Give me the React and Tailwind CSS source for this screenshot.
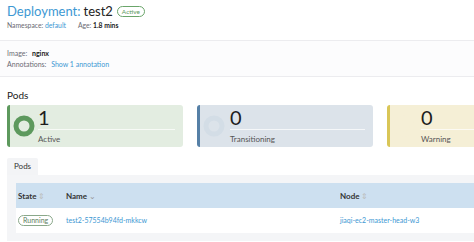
import React from "react";

function Stat({ value, label, border, bg, ring, valueOffset }) {
  return (
    <div className={`flex h-[42px] w-[176px] shrink-0 rounded-[3px] border-l-[3px] ${border} ${bg}`}>
      <div className="flex w-[28px] items-center justify-center">
        <svg width="22" height="22" viewBox="0 0 22 22">
          <circle cx="11" cy="11" r="8" fill="none" stroke={ring} strokeWidth="5" />
        </svg>
      </div>
      <div className={`flex flex-1 flex-col pr-[8px] ${valueOffset}`}>
        <div className="h-[22px] pt-[1px] text-[20px] leading-[22px] text-[#1d1d1d]">{value}</div>
        <div className="mt-[2px] border-t border-white/70 pt-[4px] text-[8px] leading-[10px] text-[#555]">{label}</div>
      </div>
    </div>
  );
}

export default function App() {
  return (
    <div className="h-[242px] w-[474px] overflow-hidden bg-white font-['Lato','Open_Sans',sans-serif]">
      <div className="px-[7px] pt-[3px]">
        <div className="flex h-[17px] items-center">
          <span className="text-[13px] leading-[17px] text-[#3d98d3]">Deployment:</span>
          <span className="ml-[3px] text-[13px] leading-[17px] text-[#222]">test2</span>
          <span className="ml-[4px] flex h-[11px] items-center rounded-full border border-[#6aa56a] px-[4px] text-[6.5px] text-[#5d995d]">Active</span>
        </div>
        <div className="text-[6.8px] leading-[10px] text-[#6b6b73]">
          Namespace: <span className="text-[#3d98d3]">default</span>
          <span className="ml-[12px]">Age: </span>
          <span className="font-bold text-[#222]">1.8 mins</span>
        </div>
      </div>
      <div className="mt-[10px] border-t border-b border-[#ececef] bg-[#fcfcfd] px-[7px] pt-[7px] pb-[6px] text-[7px] leading-[11px] text-[#6b6b73]">
        <div>Image: <span className="ml-[3px] font-bold text-[#222]">nginx</span></div>
        <div>Annotations: <span className="ml-[3px] text-[#3d98d3]">Show 1 annotation</span></div>
      </div>
      <div className="px-[7px] pt-[12px]">
        <div className="text-[10px] leading-[13px] text-[#222]">Pods</div>
        <div className="mt-[3px] flex gap-[14px]">
          <Stat value="1" label="Active" border="border-[#5d995d]" bg="bg-[#e3ede1]" ring="#5d995d" valueOffset="pl-0" />
          <Stat value="0" label="Transitioning" border="border-[#5680a6]" bg="bg-[#dce3ea]" ring="#d3dde6" valueOffset="pl-[2px]" />
          <Stat value="0" label="Warning" border="border-[#d9c657]" bg="bg-[#f5efd6]" ring="#f5efd6" valueOffset="pl-[3px]" />
        </div>
      </div>
      <div className="mt-[11px] pl-[7px]">
        <div className="flex">
          <div className="h-[17px] rounded-t-[2px] bg-[#f3f4f6] px-[7px] text-[8px] leading-[17px] text-[#333]">Pods</div>
        </div>
        <div className="bg-[#f4f5f7] pl-[9px] pt-[8px] pb-[8px]">
          <div className="bg-white">
            <div className="flex h-[25px] items-center bg-[#cde0f0] text-[8px] font-bold text-[#333]">
              <div className="w-[50px] pl-[2px]">State <span className="font-normal text-[#bbb]">⇕</span></div>
              <div className="w-[274px]">Name <span className="font-normal text-[#999]">⌄</span></div>
              <div>Node <span className="font-normal text-[#bbb]">⇕</span></div>
            </div>
            <div className="flex h-[25px] items-center text-[7px]">
              <div className="w-[50px] pl-[2px]">
                <span className="inline-flex h-[11px] items-center rounded-full border border-[#8aa88a] px-[4px] text-[7px] text-[#5d7d5d]">Running</span>
              </div>
              <div className="w-[274px] text-[#3d98d3]">test2-57554b94fd-mkkcw</div>
              <div className="text-[#3d98d3]">jiaqi-ec2-master-head-w3</div>
            </div>
          </div>
        </div>
      </div>
    </div>
  );
}
